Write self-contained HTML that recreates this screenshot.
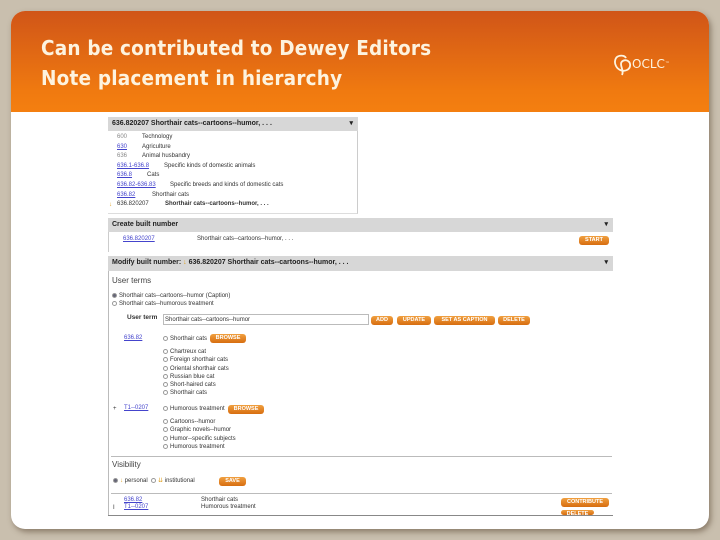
<!DOCTYPE html>
<html><head><meta charset="utf-8"><style>
*{margin:0;padding:0;box-sizing:border-box}
body{width:720px;height:540px;background:#c9bfae;position:relative;overflow:hidden;font-family:"Liberation Sans",Arial,sans-serif}
.card{position:absolute;left:11px;top:11px;width:698px;height:518px;background:#fff;border-radius:14px;overflow:hidden;box-shadow:2px 3px 6px rgba(80,60,40,.5)}
.hdr{position:absolute;left:0;top:0;width:698px;height:101px;background:linear-gradient(#d05518,#f07a10 80%,#f47f10)}
.title{position:absolute;left:30px;top:22px;color:#fdf3df;font-family:"DejaVu Sans Condensed","DejaVu Sans",sans-serif;font-weight:bold;font-size:20.5px;line-height:30px;letter-spacing:0.2px}
.logo{position:absolute;left:620px;top:55px;color:#fdf3df;font-family:"DejaVu Sans",sans-serif;font-size:12px;line-height:14px}
.a{position:absolute;font-size:6px;color:#333;white-space:nowrap;line-height:8px}
.l{color:#44c;text-decoration:underline}
.g{color:#888}
.bar{position:absolute;background:#d7d7d7;font-size:7px;font-weight:bold;color:#222;padding:3px 4px;line-height:8px}
.btn{position:absolute;background:linear-gradient(#f0a040,#d76d10);color:#fff;font-size:5.5px;font-weight:bold;border-radius:3px;text-align:center;line-height:9px;height:9px}
.r{display:inline-block;width:5px;height:5px;border:1px solid #999;border-radius:50%;margin-right:2px;vertical-align:-1px}
.hr{position:absolute;height:1px;background:#bbb}
</style></head><body>
<div class="card">
<div class="hdr"></div>
<div class="title">Can be contributed to Dewey Editors<br>Note placement in hierarchy</div>
<svg style="position:absolute;left:602px;top:42px" width="20" height="24" viewBox="0 0 20 24"><path d="M6 3 C2 4 1 9 3 13 C5 17 10 19 14 17 C18 15 18 10 15 8 C12 6 8 8 8 11 C8 15 11 18 9 22" fill="none" stroke="#fdf3df" stroke-width="1.8"/><path d="M6 3 C9 2 12 3 13 5" fill="none" stroke="#fdf3df" stroke-width="1.8"/></svg>
<div class="logo" style="left:621px;top:46px">OCLC<span style="font-size:5px;vertical-align:top">™</span></div>
</div>

<!-- top panel -->
<div style="position:absolute;left:108px;top:117px;width:250px;height:97px;border-right:1px solid #ccc;border-bottom:1px solid #ddd"></div>
<div class="bar" style="left:108px;top:117px;width:250px;height:14px">636.820207 Shorthair cats--cartoons--humor, . . . <span style="position:absolute;right:5px">▾</span></div>
<div class="a g" style="left:117px;top:133px">600</div><div class="a" style="left:142px;top:133px">Technology</div>
<div class="a l" style="left:117px;top:143px">630</div><div class="a" style="left:142px;top:143px">Agriculture</div>
<div class="a g" style="left:117px;top:152px">636</div><div class="a" style="left:142px;top:152px">Animal husbandry</div>
<div class="a l" style="left:117px;top:162px">636.1-636.8</div><div class="a" style="left:164px;top:162px">Specific kinds of domestic animals</div>
<div class="a l" style="left:117px;top:171px">636.8</div><div class="a" style="left:147px;top:171px">Cats</div>
<div class="a l" style="left:117px;top:181px">636.82-636.83</div><div class="a" style="left:170px;top:181px">Specific breeds and kinds of domestic cats</div>
<div class="a l" style="left:117px;top:191px">636.82</div><div class="a" style="left:152px;top:191px">Shorthair cats</div>
<div class="a" style="left:109px;top:201px;color:#e0a020">↓</div><div class="a" style="left:117px;top:200px">636.820207</div><div class="a" style="left:165px;top:200px;font-weight:bold">Shorthair cats--cartoons--humor, . . .</div>

<!-- create -->
<div class="bar" style="left:108px;top:218px;width:505px;height:14px">Create built number<span style="position:absolute;right:5px">▾</span></div>
<div style="position:absolute;left:108px;top:232px;width:1px;height:20px;background:#ccc"></div>
<div class="a l" style="left:123px;top:235px">636.820207</div><div class="a" style="left:197px;top:235px">Shorthair cats--cartoons--humor, . . .</div>
<div class="btn" style="left:579px;top:236px;width:30px">START</div>

<!-- modify -->
<div class="bar" style="left:108px;top:256px;width:505px;height:15px">Modify built number: <span style="color:#e0a020">↓</span> 636.820207 Shorthair cats--cartoons--humor, . . .<span style="position:absolute;right:5px">▾</span></div>
<div style="position:absolute;left:108px;top:271px;width:1px;height:245px;background:#bbb"></div>
<div class="a" style="left:112px;top:276px;font-size:8px;line-height:10px;color:#444">User terms</div>
<div class="a" style="left:112px;top:292px"><span class="r" style="background:#667"></span>Shorthair cats--cartoons--humor (Caption)</div>
<div class="a" style="left:112px;top:300px"><span class="r"></span>Shorthair cats--humorous treatment</div>
<div class="a" style="left:127px;top:314px;font-weight:bold;font-size:6.5px">User term</div>
<div style="position:absolute;left:163px;top:314px;width:206px;height:11px;border:1px solid #bbb"></div>
<div class="a" style="left:165px;top:316px">Shorthair cats--cartoons--humor</div>
<div class="btn" style="left:371px;top:316px;width:22px">ADD</div>
<div class="btn" style="left:397px;top:316px;width:34px">UPDATE</div>
<div class="btn" style="left:434px;top:316px;width:61px">SET AS CAPTION</div>
<div class="btn" style="left:498px;top:316px;width:32px">DELETE</div>
<div class="a l" style="left:124px;top:334px">636.82</div>
<div class="a" style="left:163px;top:335px"><span class="r"></span>Shorthair cats</div>
<div class="btn" style="left:210px;top:334px;width:36px">BROWSE</div>
<div class="a" style="left:163px;top:348px;line-height:8.3px"><span class="r"></span>Chartreux cat<br><span class="r"></span>Foreign shorthair cats<br><span class="r"></span>Oriental shorthair cats<br><span class="r"></span>Russian blue cat<br><span class="r"></span>Short-haired cats<br><span class="r"></span>Shorthair cats</div>
<div class="a" style="left:113px;top:405px">+</div><div class="a l" style="left:124px;top:404px">T1--0207</div>
<div class="a" style="left:163px;top:405px"><span class="r"></span>Humorous treatment</div>
<div class="btn" style="left:228px;top:405px;width:36px">BROWSE</div>
<div class="a" style="left:163px;top:418px;line-height:8.3px"><span class="r"></span>Cartoons--humor<br><span class="r"></span>Graphic novels--humor<br><span class="r"></span>Humor--specific subjects<br><span class="r"></span>Humorous treatment</div>
<div class="hr" style="left:111px;top:456px;width:501px"></div>
<div class="a" style="left:112px;top:460px;font-size:8px;line-height:10px;color:#444">Visibility</div>
<div class="a" style="left:113px;top:477px"><span class="r" style="background:#667"></span><span style="color:#e0a020">↓</span> personal &nbsp;<span class="r"></span><span style="color:#e0a020">⇊</span> institutional</div>
<div class="btn" style="left:219px;top:477px;width:27px">SAVE</div>
<div class="hr" style="left:111px;top:493px;width:501px"></div>
<div class="a l" style="left:124px;top:496px">636.82</div><div class="a" style="left:201px;top:496px">Shorthair cats</div>
<div class="a" style="left:113px;top:504px">I</div><div class="a l" style="left:124px;top:503px">T1--0207</div><div class="a" style="left:201px;top:503px">Humorous treatment</div>
<div class="btn" style="left:561px;top:498px;width:48px">CONTRIBUTE</div>
<div class="btn" style="left:561px;top:510px;width:33px;height:5px;overflow:hidden">DELETE</div>
<div class="hr" style="left:108px;top:515px;width:505px;background:#888"></div>
</body></html>
